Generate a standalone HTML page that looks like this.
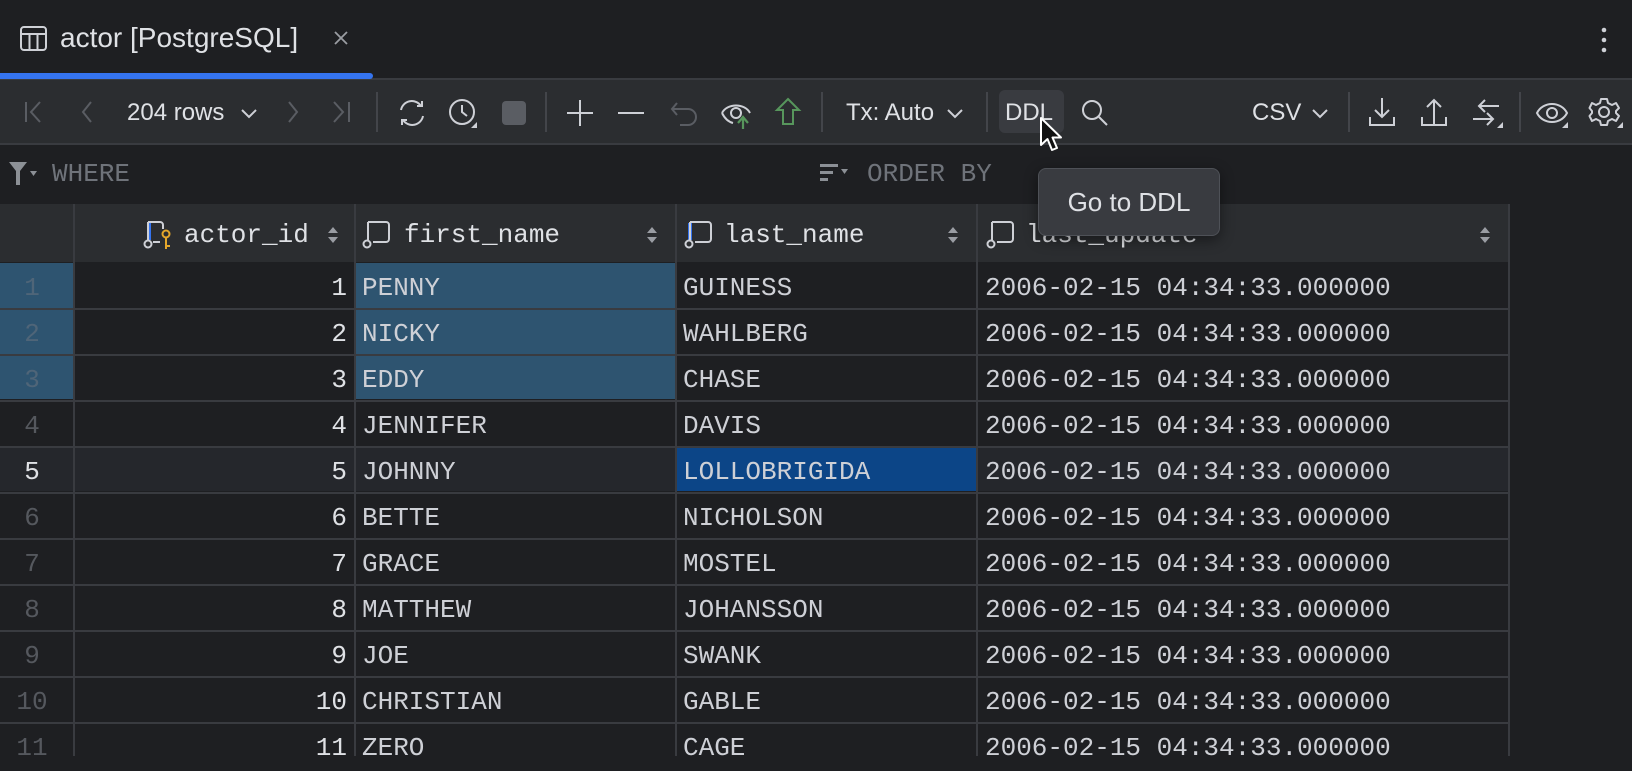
<!DOCTYPE html>
<html><head><meta charset="utf-8"><style>
*{margin:0;padding:0;box-sizing:border-box}
body{width:1632px;height:756px;overflow:hidden;background:#1e1f22;font-family:"Liberation Sans",sans-serif;color:#dfe1e5;position:relative}
.a{position:absolute}
.mono{font-family:"Liberation Mono","DejaVu Sans Mono",monospace;font-size:26px}
.vl{position:absolute;width:2px;background:#393b40}
.hl{position:absolute;height:2px;background:#393b40;left:0;width:1508px}
.tsep{position:absolute;top:92px;width:2px;height:40px;background:#43454a}
svg{position:absolute;overflow:visible}
</style></head><body>
<!-- tab bar -->
<svg style="left:20px;top:26px" width="28" height="26" viewBox="0 0 28 26"><rect x="1" y="1" width="25" height="23" rx="3" fill="none" stroke="#ced0d6" stroke-width="2"/><line x1="1" y1="8" x2="26" y2="8" stroke="#ced0d6" stroke-width="2"/><line x1="9.5" y1="8" x2="9.5" y2="24" stroke="#ced0d6" stroke-width="2"/><line x1="17.5" y1="8" x2="17.5" y2="24" stroke="#ced0d6" stroke-width="2"/></svg>
<div class="a" style="left:60px;top:22px;font-size:28px;color:#dfe1e5">actor [PostgreSQL]</div>
<svg style="left:334px;top:31px" width="14" height="14"><path d="M1 1L13 13M13 1L1 13" stroke="#9a9da3" stroke-width="1.8"/></svg>
<svg style="left:1600px;top:27px" width="8" height="28"><circle cx="4" cy="3" r="2.3" fill="#ced0d6"/><circle cx="4" cy="13" r="2.3" fill="#ced0d6"/><circle cx="4" cy="23" r="2.3" fill="#ced0d6"/></svg>
<div class="a" style="left:0;top:78px;width:1632px;height:2px;background:#393b40"></div>
<div class="a" style="left:0;top:73px;width:373px;height:6px;background:#3574f0;border-radius:0 3px 3px 0"></div>
<!-- toolbar -->
<div class="a" style="left:0;top:80px;width:1632px;height:63px;background:#2b2d30"></div>
<div class="a" style="left:0;top:143px;width:1632px;height:2px;background:#393b40"></div>
<svg style="left:24px;top:101px" width="20" height="22"><path d="M2 1V21M16 1L7 11L16 21" fill="none" stroke="#5a5d63" stroke-width="2"/></svg>
<svg style="left:80px;top:101px" width="14" height="22"><path d="M11 1L3 11L11 21" fill="none" stroke="#5a5d63" stroke-width="2"/></svg>
<div class="a" style="left:127px;top:99px;font-size:24px;color:#dfe1e5">204 rows</div>
<svg style="left:241px;top:109px" width="16" height="10"><path d="M1 1L8 8L15 1" fill="none" stroke="#ced0d6" stroke-width="2"/></svg>
<svg style="left:286px;top:101px" width="14" height="22"><path d="M3 1L11 11L3 21" fill="none" stroke="#5a5d63" stroke-width="2"/></svg>
<svg style="left:332px;top:101px" width="20" height="22"><path d="M2 1L11 11L2 21M17 1V21" fill="none" stroke="#5a5d63" stroke-width="2"/></svg>
<div class="tsep" style="left:376px"></div>
<svg style="left:396px;top:98px" width="32" height="30"><path d="M5 12A11 11 0 0 1 25 8M27 18A11 11 0 0 1 7 22M21 8H26V3M11 22H6V27" fill="none" stroke="#ced0d6" stroke-width="2"/></svg>
<svg style="left:448px;top:97px" width="32" height="32"><circle cx="14" cy="15" r="12" fill="none" stroke="#ced0d6" stroke-width="2"/><path d="M14 8V15L19 19" fill="none" stroke="#ced0d6" stroke-width="2"/><path d="M29 25V31H23Z" fill="#ced0d6"/></svg>
<div class="a" style="left:502px;top:101px;width:24px;height:24px;background:#5a5d63;border-radius:4px"></div>
<div class="tsep" style="left:545px"></div>
<svg style="left:566px;top:99px" width="28" height="28"><path d="M14 1V27M1 14H27" stroke="#ced0d6" stroke-width="2"/></svg>
<svg style="left:617px;top:99px" width="28" height="28"><path d="M1 14H27" stroke="#ced0d6" stroke-width="2"/></svg>
<svg style="left:671px;top:99px" width="28" height="28"><path d="M6 4L1 10L6 16M1 10H17A8 8 0 0 1 17 26H9" fill="none" stroke="#5a5d63" stroke-width="2"/></svg>
<svg style="left:720px;top:98px" width="34" height="32"><path d="M2 15C7 5 25 5 30 15" fill="none" stroke="#ced0d6" stroke-width="2"/><path d="M2 15C5 21 9 24 13 25" fill="none" stroke="#ced0d6" stroke-width="2"/><circle cx="16" cy="15" r="5" fill="none" stroke="#ced0d6" stroke-width="2"/><path d="M23 31V21M18 25L23 19L28 25" fill="none" stroke="#57965c" stroke-width="2.2"/></svg>
<svg style="left:775px;top:98px" width="26" height="28"><path d="M13 1L24 12H18V26H8V12H2Z" fill="none" stroke="#57965c" stroke-width="2"/></svg>
<div class="tsep" style="left:821px"></div>
<div class="a" style="left:846px;top:99px;font-size:24px;color:#dfe1e5">Tx: Auto</div>
<svg style="left:947px;top:109px" width="16" height="10"><path d="M1 1L8 8L15 1" fill="none" stroke="#ced0d6" stroke-width="2"/></svg>
<div class="tsep" style="left:986px"></div>
<div class="a" style="left:999px;top:90px;width:65px;height:43px;background:#393b40;border-radius:6px"></div>
<div class="a" style="left:1005px;top:99px;font-size:24px;color:#dfe1e5">DDL</div>
<svg style="left:1081px;top:99px" width="28" height="28"><circle cx="11" cy="11" r="9" fill="none" stroke="#ced0d6" stroke-width="2"/><path d="M18 18L26 26" stroke="#ced0d6" stroke-width="2"/></svg>
<div class="a" style="left:1252px;top:99px;font-size:24px;color:#dfe1e5">CSV</div>
<svg style="left:1312px;top:109px" width="16" height="10"><path d="M1 1L8 8L15 1" fill="none" stroke="#ced0d6" stroke-width="2"/></svg>
<div class="tsep" style="left:1348px"></div>
<svg style="left:1368px;top:97px" width="28" height="30"><path d="M14 1V20M7 13L14 20L21 13M2 20V28H26V20" fill="none" stroke="#ced0d6" stroke-width="2"/></svg>
<svg style="left:1420px;top:97px" width="28" height="30"><path d="M14 28V3M7 10L14 3L21 10M2 20V28H26V20" fill="none" stroke="#ced0d6" stroke-width="2"/></svg>
<svg style="left:1471px;top:97px" width="34" height="32"><path d="M8 9H28M14 3L8 9L14 15M2 22H22M16 16L22 22L16 28" fill="none" stroke="#ced0d6" stroke-width="2"/><path d="M32 25V31H26Z" fill="#ced0d6"/></svg>
<div class="tsep" style="left:1519px"></div>
<svg style="left:1535px;top:99px" width="36" height="30"><path d="M2 14C8 2 26 2 32 14C26 26 8 26 2 14Z" fill="none" stroke="#ced0d6" stroke-width="2"/><circle cx="17" cy="14" r="5" fill="none" stroke="#ced0d6" stroke-width="2"/><path d="M33 23V29H27Z" fill="#ced0d6"/></svg>
<svg style="left:1589px;top:97px" width="36" height="32"><circle cx="15" cy="15" r="5" fill="none" stroke="#ced0d6" stroke-width="2"/><path d="M12 2H18L19 6L23 8L27 6L30 11L27 14V16L30 19L27 24L23 22L19 24L18 28H12L11 24L7 22L3 24L0.5 19L3 16V14L0.5 11L3 6L7 8L11 6Z" fill="none" stroke="#ced0d6" stroke-width="2" stroke-linejoin="round"/><path d="M34 25V31H28Z" fill="#ced0d6"/></svg>
<!-- filter bar -->
<svg style="left:8px;top:161px" width="30" height="26"><path d="M1 1H19L12 10V24H8V10Z" fill="#8c9096"/><path d="M22 10H29L25.5 15Z" fill="#8c9096"/></svg>
<div class="a mono" style="left:52px;top:159px;color:#6f737a">WHERE</div>
<svg style="left:820px;top:163px" width="36" height="22"><rect x="0" y="1" width="18" height="3" fill="#8c9096"/><rect x="0" y="8" width="13" height="3" fill="#8c9096"/><rect x="0" y="15" width="8" height="3" fill="#8c9096"/><path d="M21 6H28L24.5 11Z" fill="#8c9096"/></svg>
<div class="a mono" style="left:867px;top:159px;color:#6f737a">ORDER BY</div>
<!-- header -->
<div class="a" style="left:0;top:204px;width:1508px;height:58px;background:#2b2d30"></div>
<svg style="left:144px;top:220px" width="36" height="30"><path d="M5 20V3" stroke="#3574f0" stroke-width="4"/><path d="M4 2H16A3 3 0 0 1 19 5V9M4 2V20M9 22H16" fill="none" stroke="#ced0d6" stroke-width="2"/><circle cx="4" cy="24" r="3.5" fill="none" stroke="#ced0d6" stroke-width="2"/><circle cx="22" cy="14" r="3.5" fill="none" stroke="#e5a72b" stroke-width="2"/><path d="M22 18V29M22 26H26" stroke="#e5a72b" stroke-width="2"/></svg>
<div class="a mono" style="left:184px;top:220px;color:#dfe1e5">actor_id</div>
<svg style="left:327px;top:225px" width="12" height="20"><path d="M1 8L6 2L11 8ZM1 12L6 18L11 12Z" fill="#9a9da3"/></svg>
<svg style="left:362px;top:220px" width="32" height="30"><path d="M6 2H24A3 3 0 0 1 27 5V19A3 3 0 0 1 24 22H11M6 2V20" fill="none" stroke="#ced0d6" stroke-width="2"/><circle cx="5" cy="24" r="3.5" fill="none" stroke="#ced0d6" stroke-width="2"/></svg>
<div class="a mono" style="left:404px;top:220px;color:#dfe1e5">first_name</div>
<svg style="left:646px;top:225px" width="12" height="20"><path d="M1 8L6 2L11 8ZM1 12L6 18L11 12Z" fill="#9a9da3"/></svg>
<svg style="left:684px;top:220px" width="32" height="30"><path d="M6 20V3" stroke="#3574f0" stroke-width="4"/><path d="M6 2H24A3 3 0 0 1 27 5V19A3 3 0 0 1 24 22H11M6 2V20" fill="none" stroke="#ced0d6" stroke-width="2"/><circle cx="5" cy="24" r="3.5" fill="none" stroke="#ced0d6" stroke-width="2"/></svg>
<div class="a mono" style="left:724px;top:220px;color:#dfe1e5">last_name</div>
<svg style="left:947px;top:225px" width="12" height="20"><path d="M1 8L6 2L11 8ZM1 12L6 18L11 12Z" fill="#9a9da3"/></svg>
<svg style="left:986px;top:220px" width="32" height="30"><path d="M6 2H24A3 3 0 0 1 27 5V19A3 3 0 0 1 24 22H11M6 2V20" fill="none" stroke="#ced0d6" stroke-width="2"/><circle cx="5" cy="24" r="3.5" fill="none" stroke="#ced0d6" stroke-width="2"/></svg>
<div class="a mono" style="left:1026px;top:220px;color:#dfe1e5">last_update</div>
<svg style="left:1479px;top:225px" width="12" height="20"><path d="M1 8L6 2L11 8ZM1 12L6 18L11 12Z" fill="#9a9da3"/></svg>
<!-- rows -->
<div class="a" style="left:0;top:263px;width:73px;height:136px;background:#2e5470"></div>
<div class="a" style="left:356px;top:263px;width:319px;height:136px;background:#2e5470"></div>
<div class="a" style="left:0;top:447px;width:1508px;height:44px;background:#25272c"></div>
<div class="a" style="left:677px;top:447px;width:299px;height:44px;background:#0c4587"></div>
<div class="hl" style="top:308px"></div><div class="hl" style="top:354px"></div><div class="hl" style="top:400px"></div><div class="hl" style="top:446px"></div><div class="hl" style="top:492px"></div><div class="hl" style="top:538px"></div><div class="hl" style="top:584px"></div><div class="hl" style="top:630px"></div><div class="hl" style="top:676px"></div><div class="hl" style="top:722px"></div>
<div class="vl" style="left:73px;top:204px;height:552px"></div><div class="vl" style="left:354px;top:204px;height:552px"></div><div class="vl" style="left:675px;top:204px;height:552px"></div><div class="vl" style="left:976px;top:204px;height:552px"></div><div class="vl" style="left:1508px;top:204px;height:552px"></div>
<div class="mono" style="position:absolute;left:0;top:265px;width:1508px">
<div style="position:absolute;top:0;left:0;width:64px;text-align:center;line-height:46px;color:#4f6578">1<br>2<br>3</div>
<div style="position:absolute;top:138px;left:0;width:64px;text-align:center;line-height:46px;color:#55585e">4<br><span style="color:#dfe1e5">5</span><br>6<br>7<br>8<br>9<br>10<br>11</div>
<div style="position:absolute;top:0;left:80px;width:267px;text-align:right;line-height:46px;color:#dfe1e5">1<br>2<br>3<br>4<br>5<br>6<br>7<br>8<br>9<br>10<br>11</div>
<div style="position:absolute;top:0;left:362px;line-height:46px;color:#ced0d6">PENNY<br>NICKY<br>EDDY<br>JENNIFER<br>JOHNNY<br>BETTE<br>GRACE<br>MATTHEW<br>JOE<br>CHRISTIAN<br>ZERO</div>
<div style="position:absolute;top:0;left:683px;line-height:46px;color:#ced0d6">GUINESS<br>WAHLBERG<br>CHASE<br>DAVIS<br>LOLLOBRIGIDA<br>NICHOLSON<br>MOSTEL<br>JOHANSSON<br>SWANK<br>GABLE<br>CAGE</div>
<div style="position:absolute;top:0;left:985px;line-height:46px;color:#ced0d6">2006-02-15 04:34:33.000000<br>2006-02-15 04:34:33.000000<br>2006-02-15 04:34:33.000000<br>2006-02-15 04:34:33.000000<br>2006-02-15 04:34:33.000000<br>2006-02-15 04:34:33.000000<br>2006-02-15 04:34:33.000000<br>2006-02-15 04:34:33.000000<br>2006-02-15 04:34:33.000000<br>2006-02-15 04:34:33.000000<br>2006-02-15 04:34:33.000000</div>
</div>
<!-- tooltip -->
<div class="a" style="left:1038px;top:168px;width:182px;height:68px;background:#393b40;border:1px solid #4e5157;border-radius:8px;box-shadow:0 4px 14px rgba(0,0,0,.45);font-size:26px;color:#dfe1e5;text-align:center;line-height:66px">Go to DDL</div>
<!-- cursor -->
<svg style="left:1040px;top:117px" width="24" height="40"><path d="M1 1V28L7.5 22L12 33L17 31L12.5 20.5H21Z" fill="#111" stroke="#fff" stroke-width="2" stroke-linejoin="round"/></svg>
</body></html>
